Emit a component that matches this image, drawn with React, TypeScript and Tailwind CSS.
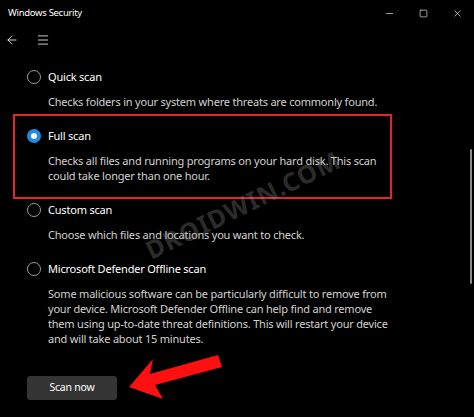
import { ArrowLeft, Menu, Minus, Square, X } from 'lucide-react';

const options = [
  {
    label: 'Quick scan',
    lines: ['Checks folders in your system where threats are commonly found.'],
  },
  {
    label: 'Full scan',
    lines: [
      'Checks all files and running programs on your hard disk. This scan',
      'could take longer than one hour.',
    ],
    selected: true,
  },
  {
    label: 'Custom scan',
    lines: ['Choose which files and locations you want to check.'],
  },
  {
    label: 'Microsoft Defender Offline scan',
    lines: [
      'Some malicious software can be particularly difficult to remove from',
      'your device. Microsoft Defender Offline can help find and remove',
      'them using up-to-date threat definitions. This will restart your device',
      'and will take about 15 minutes.',
    ],
  },
];

function Radio({ checked }: { checked?: boolean }) {
  if (checked) {
    return (
      <span className="flex h-[14px] w-[14px] items-center justify-center rounded-full bg-[#1f8ae0]">
        <span className="h-[6px] w-[6px] rounded-full bg-white" />
      </span>
    );
  }
  return <span className="h-[14px] w-[14px] rounded-full border border-[#9a9a9a]" />;
}

function Option({ label, lines, selected }: { label: string; lines: string[]; selected?: boolean }) {
  const body = (
    <>
      <div className="flex h-[20px] items-center gap-[7px]">
        <Radio checked={selected} />
        <span className="text-[11px] tracking-[-0.2px] text-white">{label}</span>
      </div>
      <p className="mt-[7px] whitespace-nowrap pl-[21px] text-[11px] leading-[15px] tracking-[-0.2px] text-[#d2d2d2]">
        {lines.map((l, i) => (
          <span key={i} className="block">
            {l}
          </span>
        ))}
      </p>
    </>
  );

  if (!selected) return <div>{body}</div>;

  // red highlight box drawn round the option
  return (
    <div className="-mb-[16px] -ml-[14px] -mt-[12px] w-[379px] border-2 border-[#e1252b] pb-[14px] pl-[12px] pt-[10px]">
      {body}
    </div>
  );
}

export default function App() {
  return (
    <div className="relative h-[417px] w-[474px] overflow-hidden bg-black font-['Noto_Sans',sans-serif] text-white">
      {/* Title bar */}
      <div className="flex h-[26px] items-center justify-between pl-[8px]">
        <span className="text-[9.5px] tracking-[-0.3px] text-white">Windows Security</span>
        <div className="flex items-center">
          <span className="flex h-[26px] w-[34px] items-center justify-center">
            <Minus size={11} strokeWidth={1.3} />
          </span>
          <span className="flex h-[26px] w-[34px] items-center justify-center">
            <Square size={9} strokeWidth={1.6} />
          </span>
          <span className="flex h-[26px] w-[34px] items-center justify-center">
            <X size={11} strokeWidth={1.3} />
          </span>
        </div>
      </div>

      {/* Nav */}
      <div className="flex h-[28px] items-center gap-[17px] pl-[5px]">
        <ArrowLeft size={14} strokeWidth={1.4} />
        <Menu size={14} strokeWidth={1.6} className="text-[#d8d8d8]" />
      </div>

      {/* Options */}
      <div className="mt-[13px] flex flex-col gap-[17px] pl-[27px]">
        {options.map((o) => (
          <Option key={o.label} {...o} />
        ))}
      </div>

      <button className="ml-[27px] mt-[30px] flex h-[24px] w-[90px] items-center justify-center rounded-[3px] bg-[#343434] text-[10.5px] tracking-[-0.2px] text-white">
        Scan now
      </button>

      {/* scroll indicator */}
      <div className="absolute left-[470px] top-[149px] h-[135px] w-[2px] rounded-full bg-[#8c8c8c]" />

      {/* watermark */}
      <div className="pointer-events-none absolute left-[243px] top-[205px] -translate-x-1/2 -translate-y-1/2 -rotate-[26deg] whitespace-nowrap text-[25px] font-bold tracking-[1px] text-[#9a9a9a]/30">
        DROIDWIN.COM
      </div>

      {/* annotation arrow */}
      <svg className="absolute left-0 top-0" width="474" height="417" viewBox="0 0 474 417">
        <polygon
          points="129,387 153,359 150,374 218,355 222,367 155,385 163,399"
          fill="#ff1010"
        />
      </svg>
    </div>
  );
}
